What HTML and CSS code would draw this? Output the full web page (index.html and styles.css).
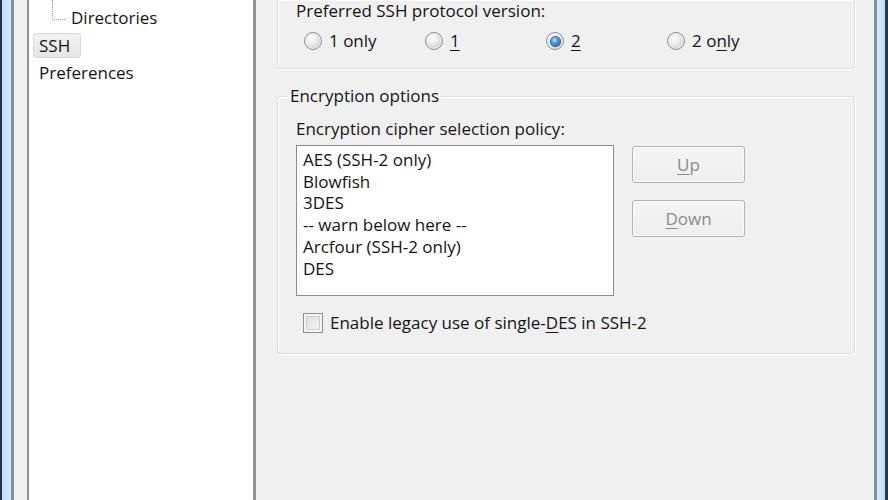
FILE: index.html
```html
<!DOCTYPE html>
<html lang="en">
<head>
<meta charset="utf-8">
<title>SSH options</title>
<link rel="stylesheet" href="styles.css">
</head>
<body>
<div class="frame-left"></div>
<div class="sidebar">
  <div class="tree">
    <div class="tree-row tree-child">
      <span class="connector"></span>
      <span class="tree-label">Directories</span>
    </div>
    <div class="tree-row">
      <span class="tree-label selected">SSH</span>
    </div>
    <div class="tree-row">
      <span class="tree-label plain">Preferences</span>
    </div>
  </div>
</div>
<div class="main">
  <div class="group group-top">
    <div class="caption top-caption">Preferred SSH protocol version:</div>
    <div class="radio-row">
      <label class="radio"><span class="radio-dot"></span><span>1 only</span></label>
      <label class="radio"><span class="radio-dot"></span><span><u>1</u></span></label>
      <label class="radio"><span class="radio-dot checked"></span><span><u>2</u></span></label>
      <label class="radio"><span class="radio-dot"></span><span>2 o<u>n</u>ly</span></label>
    </div>
  </div>
  <fieldset class="group group-enc">
    <legend>Encryption options</legend>
    <div class="enc-body">
      <div class="caption enc-caption">Encryption cipher selection policy:</div>
      <div class="list-row">
        <div class="listbox">
          <div class="item">AES (SSH-2 only)</div>
          <div class="item">Blowfish</div>
          <div class="item">3DES</div>
          <div class="item">-- warn below here --</div>
          <div class="item">Arcfour (SSH-2 only)</div>
          <div class="item">DES</div>
        </div>
        <div class="buttons">
          <button class="btn" disabled><u>U</u>p</button>
          <button class="btn" disabled><u>D</u>own</button>
        </div>
      </div>
      <label class="check-row"><span class="checkbox"></span><span>Enable legacy use of single-<u>D</u>ES in SSH-2</span></label>
    </div>
  </fieldset>
</div>
<div class="frame-right"></div>
</body>
</html>
```
FILE: styles.css
```css
html, body {
  margin: 0;
  padding: 0;
}
body {
  width: 888px;
  height: 500px;
  overflow: hidden;
  display: flex;
  background: #f0f0f0;
  font-family: "Open Sans", "Noto Sans", sans-serif;
  font-size: 17px;
  color: #141414;
}
u {
  text-decoration: underline;
  text-underline-offset: 3px;
  text-decoration-thickness: 1px;
}
.frame-left {
  flex: none;
  width: 14px;
  background: linear-gradient(to right, #27344a 0, #27344a 2px, #c4def6 2px, #d2e7fa 11px, #7f8fa3 11px, #7f8fa3 14px);
}
.frame-right {
  flex: none;
  width: 14px;
  background: linear-gradient(to right, #7f8fa3 0, #7f8fa3 3px, #d2e7fa 3px, #c4def6 11px, #27344a 11px, #27344a 14px);
}
.sidebar {
  flex: none;
  padding-left: 13px;
}
.tree {
  width: 224px;
  height: 100%;
  box-sizing: content-box;
  background: #fff;
  border-left: 2px solid #8f9196;
  border-right: 3px solid #8f9196;
  display: flex;
  flex-direction: column;
  gap: 2px;
}
.tree-row {
  display: flex;
  align-items: flex-start;
  height: 25px;
}
.tree-child {
  height: 31px;
}
.connector {
  flex: none;
  width: 13px;
  height: 20px;
  margin-left: 23px;
  border-left: 1px dotted #9a9a9a;
  border-bottom: 1px dotted #9a9a9a;
  box-sizing: border-box;
}
.tree-child .tree-label {
  margin-left: 6px;
  padding-top: 7px;
  line-height: 22px;
}
.tree-label {
  line-height: 25px;
  white-space: nowrap;
}
.tree-label.selected {
  margin-left: 4px;
  padding: 0 10px 0 5px;
  line-height: 23px;
  border: 1px solid #d9d9d9;
  border-radius: 3px;
  background: linear-gradient(#f2f2f2, #e5e5e5);
}
.tree-label.plain {
  margin-left: 10px;
}
.main {
  flex: 1;
  padding: 0 19px 0 21px;
  display: flex;
  flex-direction: column;
}
.group {
  border: 1px solid #d5dfe5;
  box-shadow: 1px 1px 0 #fff, inset 1px 1px 0 #fff;
  border-radius: 3px;
}
.group-top {
  border-top: none;
  border-radius: 0 0 3px 3px;
  height: 68px;
  padding-left: 18px;
}
.caption {
  line-height: 20px;
  white-space: nowrap;
}
.top-caption {
  line-height: 22px;
}
.radio-row {
  margin-top: 8px;
  padding-left: 8px;
  display: grid;
  grid-template-columns: 121px 121px 121px 121px;
  height: 22px;
}
.radio {
  display: flex;
  align-items: center;
  gap: 7px;
  line-height: 22px;
}
.radio-dot {
  flex: none;
  width: 18px;
  height: 18px;
  box-sizing: border-box;
  border-radius: 50%;
  border: 1px solid #8e8f8f;
  background: radial-gradient(circle at 40% 35%, #fdfdfd 0, #eeeeee 35%, #cfcfcf 75%, #e6e6e6 100%);
  box-shadow: inset 0 0 0 1px #f2f2f2;
  display: flex;
  align-items: center;
  justify-content: center;
}
.radio-dot.checked::after {
  content: "";
  width: 9px;
  height: 9px;
  border-radius: 50%;
  background: radial-gradient(circle at 40% 35%, #bfe6ff 0, #4ea2e0 35%, #17508f 90%);
  box-shadow: 0 0 0 1px #2b5d8e;
}
fieldset.group-enc {
  margin: 16px 0 0 0;
  padding: 0;
  min-width: 0;
  height: 269px;
  box-sizing: border-box;
}
legend {
  margin-left: 10px;
  padding: 0 2px;
  line-height: 22px;
}
.enc-body {
  padding: 12px 0 0 18px;
}
.list-row {
  display: flex;
  margin-top: 6px;
}
.listbox {
  width: 318px;
  height: 151px;
  box-sizing: border-box;
  background: #fff;
  border: 1px solid #8a8c90;
  padding: 3px 0 0 6px;
}
.item {
  line-height: 21.7px;
  white-space: nowrap;
}
.buttons {
  margin-left: 18px;
  margin-top: 1px;
  display: flex;
  flex-direction: column;
  gap: 17px;
}
.btn {
  width: 113px;
  height: 37px;
  border: 1px solid #b3b3b3;
  border-radius: 3px;
  background: linear-gradient(#f4f4f4, #efefef);
  box-shadow: inset 0 0 0 1px #fbfbfb;
  font: inherit;
  color: #8b8b8b;
  padding: 0;
}
.check-row {
  display: flex;
  align-items: center;
  gap: 7px;
  margin-top: 17px;
  margin-left: 7px;
  line-height: 20px;
  white-space: nowrap;
}
.checkbox {
  flex: none;
  width: 20px;
  height: 20px;
  box-sizing: border-box;
  border: 1px solid #8e8f8f;
  background: linear-gradient(135deg, #dcdcdc, #f6f6f6);
  box-shadow: inset 0 0 0 2px #f4f4f4, inset 0 0 0 3px #cdcdcd;
}
```
